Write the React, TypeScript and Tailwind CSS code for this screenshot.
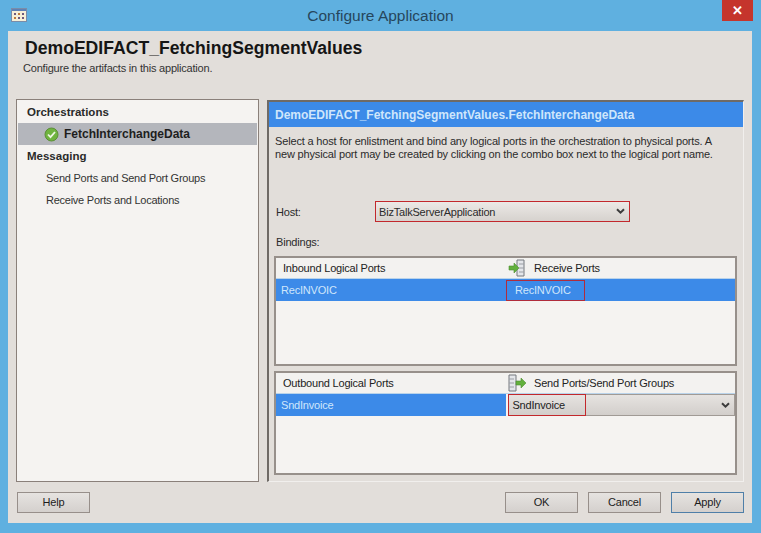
const font = { fontFamily: '"Liberation Sans", Arial, sans-serif' };

function GridIcon() {
  return (
    <svg width="16" height="14" viewBox="0 0 16 14" className="-mt-[2px]">
      <rect x="0.5" y="0.5" width="15" height="13" fill="#f6efd8" stroke="#7a8ca8" />
      <rect x="1" y="1" width="14" height="2" fill="#5f80b4" />
      {[3, 7, 11].map((x) => (
        <g key={x}>
          <rect x={x} y="5" width="2" height="2" fill={x === 7 ? "#c07a3a" : "#6d5a7e"} />
          <rect x={x} y="9" width="2" height="2" fill={x === 3 ? "#c07a3a" : "#6d5a7e"} />
        </g>
      ))}
    </svg>
  );
}

function CheckIcon() {
  return (
    <svg width="15" height="15" viewBox="0 0 15 15">
      <circle cx="7.5" cy="7.5" r="6.5" fill="#6fb43f" stroke="#5c8f36" />
      <path d="M4 7.5l2.5 2.6L11 5" fill="none" stroke="#eef6e2" strokeWidth="1.8" />
    </svg>
  );
}

function ReceiveIcon() {
  return (
    <svg width="18" height="18" viewBox="0 0 18 18">
      <path d="M9 1h7v16H9z" fill="#e4e6ea" stroke="#74787e" />
      <path d="M11 5h5M11 9h5M11 13h5" stroke="#9a9ea4" />
      <path d="M1 7h5V4l5 5-5 5v-3H1z" fill="#62b03c" stroke="#4f8f33" strokeWidth="0.6" />
    </svg>
  );
}

function SendIcon() {
  return (
    <svg width="18" height="18" viewBox="0 0 18 18">
      <path d="M1 1h7v16H1z" fill="#e4e6ea" stroke="#74787e" />
      <path d="M1 5h5M1 9h5M1 13h5" stroke="#9a9ea4" />
      <path d="M8 7h5V4l5 5-5 5v-3H8z" fill="#62b03c" stroke="#4f8f33" strokeWidth="0.6" />
    </svg>
  );
}

function Chevron() {
  return (
    <svg width="9" height="7" viewBox="0 0 9 7">
      <path d="M1 1.2l3.5 3.5L8 1.2" fill="none" stroke="#3c3c3c" strokeWidth="2" />
    </svg>
  );
}

function DialogButton({ label, active }: { label: string; active?: boolean }) {
  return (
    <button
      className={`w-[73px] h-[21px] border text-[11px] tracking-[-0.2px] text-[#1c1c1c] bg-linear-to-b from-[#e6e3e0] to-[#d4d0cd] ${
        active ? "border-[#4f7fa8]" : "border-[#978f8a]"
      }`}
    >
      {label}
    </button>
  );
}

function BindingTable({
  leftTitle,
  rightTitle,
  rowName,
  icon,
  children,
  className,
}: {
  leftTitle: string;
  rightTitle: string;
  rowName: string;
  icon: React.ReactNode;
  children: React.ReactNode;
  className: string;
}) {
  return (
    <div className={`ml-[5px] mr-[6px] border-2 border-[#97908b] bg-[#f5f3f1] ${className}`}>
      <div className="h-[21px] flex items-center text-[11px] tracking-[-0.2px] text-[#222] bg-[#f3f2f0] border-b border-[#b9d3ea]">
        <div className="w-[232px] pl-[7px]">{leftTitle}</div>
        <div className="flex items-center gap-[8px]">
          {icon}
          <span>{rightTitle}</span>
        </div>
      </div>
      <div className="h-[22px] flex text-[11px] tracking-[-0.2px]">
        <div className="w-[232px] bg-[#3c8ae8] text-[#cfe6fb] pl-[5px] flex items-center">{rowName}</div>
        {children}
      </div>
    </div>
  );
}

export default function App() {
  return (
    <div className="w-[761px] h-[533px] flex flex-col bg-[#5fb0e0] overflow-hidden" style={font}>
      {/* title bar */}
      <div className="h-[31px] shrink-0 flex items-center pl-[11px] pr-[8px] relative">
        <GridIcon />
        <div className="flex-1 text-center text-[15.5px] text-[#26465c] pr-[19px]">Configure Application</div>
        <div className="absolute right-[8px] top-0 w-[31px] h-[21px] bg-[#c5352c] flex items-center justify-center text-white text-[13px] font-bold">
          ✕
        </div>
      </div>

      {/* client area */}
      <div className="h-[492px] ml-[8px] mr-[9px] bg-[#e2deda] flex flex-col">
        <div className="h-[68px] shrink-0 pl-[15px] pt-[7px]">
          <h1 className="text-[17.6px] leading-[20px] font-bold text-[#151515] pl-[2px]">DemoEDIFACT_FetchingSegmentValues</h1>
          <p className="mt-[2px] text-[11px] tracking-[-0.2px] leading-[16px] text-[#333]">Configure the artifacts in this application.</p>
        </div>

        <div className="h-[383px] flex pl-[8px]">
          {/* nav */}
          <div className="w-[243px] border border-[#8a807a] bg-[#f5f3f1] p-[1px] text-[11px] tracking-[-0.25px] text-[#333]">
            <div className="h-[22px] pl-[9px] pt-[1px] flex items-center font-bold text-[11.5px] tracking-normal text-[#2a2a2a]">Orchestrations</div>
            <div className="h-[22px] pl-[26px] flex items-center gap-[5px] bg-[#b4b6bc] font-bold text-[#1e1e1e] text-[12px] tracking-normal">
              <CheckIcon />
              <span>FetchInterchangeData</span>
            </div>
            <div className="h-[22px] pl-[9px] pt-[1px] flex items-center font-bold text-[11.5px] tracking-normal text-[#2a2a2a]">Messaging</div>
            <div className="h-[22px] pl-[28px] flex items-center">Send Ports and Send Port Groups</div>
            <div className="h-[22px] pl-[28px] flex items-center">Receive Ports and Locations</div>
          </div>

          {/* detail */}
          <div className="w-[477px] ml-[8px] mt-[1px] border-l-2 border-t-2 border-[#6f6a66] border-r border-r-[#f1efed] border-b border-b-[#f1efed] flex flex-col">
            <div className="h-[25px] shrink-0 bg-[#3c8ae8] pl-[6px] flex items-center text-[12px] font-bold text-[#cfe6fb]">
              DemoEDIFACT_FetchingSegmentValues.FetchInterchangeData
            </div>
            <p className="pl-[6px] pt-[8px] text-[11px] tracking-[-0.16px] leading-[13px] text-[#2b2b2b] h-[74px] shrink-0 whitespace-nowrap">
              Select a host for enlistment and bind any logical ports in the orchestration to physical ports. A
              <br />
              new physical port may be created by clicking on the combo box next to the logical port name.
            </p>
            <div className="flex items-center h-[21px] shrink-0 text-[11px] tracking-[-0.2px] text-[#2b2b2b]">
              <span className="w-[106px] pl-[7px] pt-[1px]">Host:</span>
              <div className="w-[255px] h-[21px] border border-[#c2282c] bg-linear-to-b from-[#ece9e6] to-[#d6d2ce] flex items-center justify-between pl-[3px] pr-[4px]">
                <span className="pt-[2px]">BizTalkServerApplication</span>
                <Chevron />
              </div>
            </div>
            <div className="h-[34px] shrink-0 pl-[7px] pt-[13px] text-[11px] tracking-[-0.2px] leading-[14px] text-[#2b2b2b]">Bindings:</div>

            <BindingTable
              className="h-[110px]"
              leftTitle="Inbound Logical Ports"
              rightTitle="Receive Ports"
              rowName="RecINVOIC"
              icon={<ReceiveIcon />}
            >
              <div className="flex-1 bg-[#3c8ae8] text-[#cfe6fb] flex items-center">
                <div className="w-[79px] h-[21px] border border-[#b02c3c] pl-[8px] flex items-center -ml-[2px]">RecINVOIC</div>
              </div>
            </BindingTable>

            <BindingTable
              className="h-[104px] mt-[5px]"
              leftTitle="Outbound Logical Ports"
              rightTitle="Send Ports/Send Port Groups"
              rowName="SndInvoice"
              icon={<SendIcon />}
            >
              <div className="ml-[2px] w-[228px] relative bg-linear-to-b from-[#e6e3e0] to-[#d2cecb] border border-[#a09a95] flex items-center justify-between pl-[3px] pr-[4px] text-[#222]">
                <span>SndInvoice</span>
                <Chevron />
                <div className="absolute left-[-1px] top-[-1px] w-[78px] h-[22px] border border-[#c2282c]" />
              </div>
            </BindingTable>
          </div>
        </div>

        <div className="flex items-start pl-[9px] pt-[10px]">
          <DialogButton label="Help" />
          <div className="ml-auto flex gap-[10px] mr-[8px]">
            <DialogButton label="OK" />
            <DialogButton label="Cancel" />
            <DialogButton label="Apply" active />
          </div>
        </div>
      </div>
    </div>
  );
}
